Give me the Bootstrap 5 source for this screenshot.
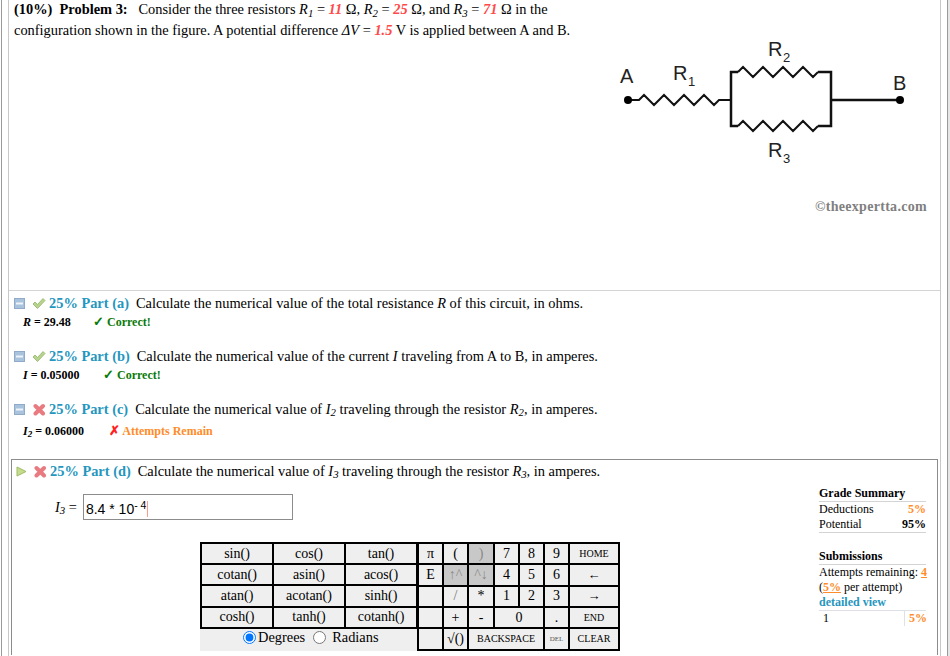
<!DOCTYPE html>
<html lang="en">
<head>
<meta charset="UTF-8">
<title>Problem 3</title>
<link rel="stylesheet" href="https://cdn.jsdelivr.net/npm/bootstrap@5.3.0/dist/css/bootstrap.min.css">
<style>
    html, body { height: 656px; overflow: hidden; }
    body { font-family: "Liberation Serif", "Times New Roman", serif; font-size: 14.4px; line-height: 21px; color: #000; background: #fff; position: relative; }
    .outer-line { position: absolute; top: 0; bottom: 0; width: 1px; background: #9a9a9a; }
    .outer-fill { position: absolute; top: 0; bottom: 0; left: 948px; width: 2px; background: #e6e6e6; }
    .page-frame { height: 656px; margin-left: 8px; width: 933px; border-left: 1px solid #c8c8c8; border-right: 1px solid #c8c8c8; padding-left: 5px; position: relative; overflow: hidden; }
    .question-head { height: 292px; position: relative; margin-left: -5px; padding: 0 5px; border-bottom: 1px solid #d4d4d4; }
    .statement { width: 575px; margin: -1px 0 0; }
    .given { color: #ff4a4a; font-style: italic; font-weight: bold; }
    .figure-box { position: absolute; left: 607px; top: 39px; }
    .copy-note { position: absolute; right: 13px; top: 197px; color: #7f7f7f; font-weight: bold; font-size: 14px; letter-spacing: .3px; }
    .part-row { height: 53px; padding-top: 1px; }
    .part-title { height: 22px; display: flex; align-items: center; white-space: nowrap; }
    .part-icon { margin-left: 7px; margin-right: 3px; }
    .play-icon { margin-left: 1px; margin-right: -1px; }
    .part-label { color: #2596be; font-weight: bold; margin-right: 7px; }
    .result-line { font-size: 12px; font-weight: bold; display: flex; padding-left: 9px; height: 16px; align-items: center; }
    .result-gap { margin-top: 3px; }
    .ans-ok { color: #0a7a0a; }
    .ans-warn { color: #ff8c28; }
    .active-part { border: 1px solid #8c8c8c; border-bottom: 0; margin-left: -3px; width: 927px; height: 196px; position: relative; padding-left: 3px; margin-top: 9px; }
    .answer-row { margin: 12px 0 0 40px; gap: 6px; }
    .answer-input { width: 210px; height: 26px; border: 1px solid #8c8c8c; padding: 4px 0 0 2px; font-family: "Liberation Sans", Arial, sans-serif; font-size: 14px; line-height: 20px; }
    .caret-mark { border-left: 1px solid #ff9a8a; margin-left: 1px; }
    .keypad { position: absolute; left: 188px; top: 82px; display: flex; }
    .keypad table { border-collapse: collapse; background: #efefef; }
    .keypad td { border: 2px solid #000; text-align: center; padding: 0; height: 21.2px; font-size: 14px; line-height: 14px; }
    .fn-keys td { width: 72px; }
    .num-keys { table-layout: fixed; width: 201px; margin-left: -1px; }
    .num-keys .wide-key { font-size: 10px; }
    .num-keys .arrow-key { font-size: 13px; }
    .num-keys .tiny-key { font-size: 7px; color: #555; }
    .num-keys .off-key { background: #c8c8c8; color: #888; }
    .num-keys .soft-key { color: #777; }
    .mode-row { background: #efefef; height: 22px; display: flex; align-items: center; padding: 0 0 5px 43px; }
    .mode-row input { margin: 0 2px 0 0; }
    .side-panel { position: absolute; left: 807px; top: 26px; width: 107px; font-size: 12px; line-height: 15px; }
    .side-head { font-weight: bold; border-bottom: 1px solid #d4d4d4; }
    .side-rows { border-bottom: 1px solid #d4d4d4; }
    .side-warn { color: #ff8c28; font-weight: bold; }
    .side-link { color: #2596be; font-weight: bold; }
    .side-note { white-space: nowrap; }
    .tick-mark { font-size: 13px; }
</style>
</head>
<body>
<div class="outer-line" style="left:1px"></div>
<div class="outer-line" style="left:947px"></div>
<div class="outer-fill"></div>
<div class="page-frame">
    <div class="question-head">
        <p class="statement"><b>(10%)&nbsp; Problem 3:</b>&nbsp;&nbsp; Consider the three resistors <i>R<sub>1</sub></i> = <span class="given">11</span> Ω, <i>R<sub>2</sub></i> = <span class="given">25</span> Ω, and <i>R<sub>3</sub></i> = <span class="given">71</span> Ω in the configuration shown in the figure. A potential difference <i>ΔV</i> = <span class="given">1.5</span> V is applied between A and B.</p>
        <div class="figure-box">
            <svg width="310" height="130" viewBox="0 0 310 130" font-family="Liberation Sans, Arial, sans-serif" font-size="20" fill="#222">
                <text x="4" y="45">A</text>
                <text x="57" y="42">R</text><text x="72" y="48" font-size="13">1</text>
                <text x="152" y="18">R</text><text x="167" y="24" font-size="13">2</text>
                <text x="277" y="52">B</text>
                <text x="152" y="119">R</text><text x="167" y="125" font-size="13">3</text>
                <g fill="none" stroke="#111">
                    <path stroke-width="2" d="M12 62H23l5-5 10 10 10-10 10 10 10-10 10 10 10-10 10 10 5-5H114"/>
                    <path stroke-width="2" d="M122 34l5-5 10 10 10-10 10 10 10-10 10 10 10-10 10 10 5-5"/>
                    <path stroke-width="2" d="M122 88l5-5 10 10 10-10 10 10 10-10 10 10 10-10 10 10 5-5"/>
                    <path stroke-width="2.5" d="M122 34H115V88H122M202 34H215V88H202M215 62H284"/>
                </g>
                <circle cx="12" cy="62" r="4" fill="#000"/><circle cx="284" cy="62" r="4" fill="#000"/>
            </svg>
        </div>
        <div class="copy-note">©theexpertta.com</div>
    </div>
    <div class="part-row">
        <div class="part-title">
            <svg width="11" height="11" viewBox="0 0 11 11"><rect x=".5" y=".5" width="10" height="10" fill="#a9c3dc" stroke="#8fabc9"/><rect x="2" y="4.5" width="7" height="2" fill="#eef4fa"/></svg>
            <svg class="part-icon" width="14" height="13" viewBox="0 0 14 13"><path d="M1 7l2-2 2.5 2.5L11 1.500l2 2-7.500 8z" fill="#b7d48c" stroke="#93b26a" stroke-width=".8"/></svg>
            <span class="part-label">25% Part (a)</span><span>Calculate the numerical value of the total resistance <i>R</i> of this circuit, in ohms.</span>
        </div>
        <div class="result-line"><span style="width:70px"><i>R</i> = 29.48</span><span class="ans-ok"><span class="tick-mark">✓</span> Correct!</span></div>
    </div>
    <div class="part-row">
        <div class="part-title">
            <svg width="11" height="11" viewBox="0 0 11 11"><rect x=".5" y=".5" width="10" height="10" fill="#a9c3dc" stroke="#8fabc9"/><rect x="2" y="4.5" width="7" height="2" fill="#eef4fa"/></svg>
            <svg class="part-icon" width="14" height="13" viewBox="0 0 14 13"><path d="M1 7l2-2 2.5 2.5L11 1.500l2 2-7.500 8z" fill="#b7d48c" stroke="#93b26a" stroke-width=".8"/></svg>
            <span class="part-label">25% Part (b)</span><span>Calculate the numerical value of the current <i>I</i> traveling from A to B, in amperes.</span>
        </div>
        <div class="result-line"><span style="width:80px"><i>I</i> = 0.05000</span><span class="ans-ok"><span class="tick-mark">✓</span> Correct!</span></div>
    </div>
    <div class="part-row">
        <div class="part-title">
            <svg width="11" height="11" viewBox="0 0 11 11"><rect x=".5" y=".5" width="10" height="10" fill="#a9c3dc" stroke="#8fabc9"/><rect x="2" y="4.5" width="7" height="2" fill="#eef4fa"/></svg>
            <svg class="part-icon" width="14" height="13" viewBox="0 0 14 13"><path d="M3.500 3l7.500 7.500M11 3l-7.500 7.500" fill="none" stroke="#e87a80" stroke-width="4" stroke-linecap="round"/></svg>
            <span class="part-label">25% Part (c)</span><span>Calculate the numerical value of <i>I<sub>2</sub></i> traveling through the resistor <i>R<sub>2</sub></i>, in amperes.</span>
        </div>
        <div class="result-line result-gap"><span style="width:86px"><i>I<sub>2</sub></i> = 0.06000</span><span class="ans-warn"><span class="tick-mark" style="color:#f22">✗</span> Attempts Remain</span></div>
    </div>
    <div class="active-part">
        <div class="part-title">
            <svg class="play-icon" width="11" height="11" viewBox="0 0 11 11"><path d="M1 1l9 4.500-9 4.500z" fill="#c5dc8e" stroke="#9fbb63"/></svg>
            <svg class="part-icon" width="14" height="13" viewBox="0 0 14 13"><path d="M3.500 3l7.500 7.500M11 3l-7.500 7.500" fill="none" stroke="#e87a80" stroke-width="4" stroke-linecap="round"/></svg>
            <span class="part-label">25% Part (d)</span><span>Calculate the numerical value of <i>I<sub>3</sub></i> traveling through the resistor <i>R<sub>3</sub></i>, in amperes.</span>
        </div>
        <div class="d-flex align-items-center answer-row">
            <span><i>I<sub>3</sub></i> =</span>
            <div class="answer-input">8.4 * 10<sup>- 4</sup><span class="caret-mark"></span></div>
        </div>
        <div class="keypad">
            <div>
                <table class="fn-keys">
                    <tr><td>sin()</td><td>cos()</td><td>tan()</td></tr>
                    <tr><td>cotan()</td><td>asin()</td><td>acos()</td></tr>
                    <tr><td>atan()</td><td>acotan()</td><td>sinh()</td></tr>
                    <tr><td>cosh()</td><td>tanh()</td><td>cotanh()</td></tr>
                </table>
                <div class="mode-row">
                    <input type="radio" name="angle" checked><span>Degrees</span>
                    <input class="ms-2" type="radio" name="angle"><span class="ms-1">Radians</span>
                </div>
            </div>
            <table class="num-keys">
                <colgroup><col style="width:25px"><col style="width:25px"><col style="width:26px"><col style="width:25px"><col style="width:25px"><col style="width:25px"><col style="width:50px"></colgroup>
                <tr><td>π</td><td>(</td><td class="off-key">)</td><td>7</td><td>8</td><td>9</td><td class="wide-key">HOME</td></tr>
                <tr><td>E</td><td class="off-key">↑^</td><td class="off-key">^↓</td><td>4</td><td>5</td><td>6</td><td class="wide-key arrow-key">←</td></tr>
                <tr><td></td><td class="soft-key">/</td><td>*</td><td>1</td><td>2</td><td>3</td><td class="wide-key arrow-key">→</td></tr>
                <tr><td></td><td>+</td><td>-</td><td colspan="2">0</td><td>.</td><td class="wide-key">END</td></tr>
                <tr><td></td><td>√()</td><td colspan="3" class="wide-key">BACKSPACE</td><td class="tiny-key">DEL</td><td class="wide-key">CLEAR</td></tr>
            </table>
        </div>
        <div class="side-panel">
            <div class="side-head">Grade Summary</div>
            <div class="side-rows">
                <div class="d-flex justify-content-between"><span>Deductions</span><span class="side-warn">5%</span></div>
                <div class="d-flex justify-content-between"><span>Potential</span><b>95%</b></div>
            </div>
            <div class="side-head mt-3">Submissions</div>
            <div class="side-note">Attempts remaining: <u class="side-warn">4</u><br>(<u class="side-warn">5%</u> per attempt)<br><span class="side-link">detailed view</span></div>
            <div class="d-flex justify-content-between border-top"><span class="ms-1">1</span><span class="side-warn border-start ps-1" style="width:22px">5%</span></div>
        </div>
    </div>
</div>
<script src="https://cdn.jsdelivr.net/npm/bootstrap@5.3.0/dist/js/bootstrap.bundle.min.js"></script>
</body>
</html>
